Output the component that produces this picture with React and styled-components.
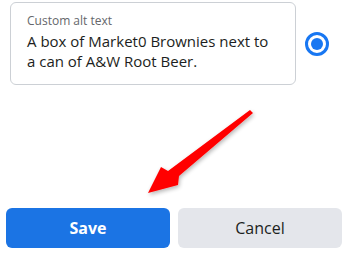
import React from "react";
import styled, { createGlobalStyle } from "styled-components";

const Global = createGlobalStyle`
  html, body { margin: 0; padding: 0; background: #fff; }
  body { font-family: "Open Sans", "Noto Sans", Arial, sans-serif; }
`;

const Page = styled.div`
  position: relative;
  width: 350px;
  height: 258px;
  overflow: hidden;
  display: flex;
  flex-direction: column;
  padding: 2px 8px 10px 6px;
  box-sizing: border-box;
`;

const Row = styled.div`
  display: flex;
  align-items: center;
  gap: 9px;
  padding-left: 4px;
`;

const Field = styled.div`
  width: 286px;
  height: 83px;
  box-sizing: border-box;
  border: 1px solid #ccd0d5;
  border-radius: 6px;
  padding: 10px 16px 0 16px;
`;

const Label = styled.div`
  font-size: 12px;
  line-height: 16px;
  color: #65676b;
`;

const Value = styled.div`
  font-size: 15px;
  line-height: 20px;
  color: #1c1e21;
  margin-top: 2px;
`;

const Radio = styled.div`
  width: 24px;
  height: 24px;
  box-sizing: border-box;
  border-radius: 50%;
  border: 3px solid #1877f2;
  display: flex;
  align-items: center;
  justify-content: center;
  &::after {
    content: "";
    width: 12px;
    height: 12px;
    border-radius: 50%;
    background: #1877f2;
  }
`;

const Spacer = styled.div`
  flex: 1;
`;

const Buttons = styled.div`
  display: flex;
  gap: 8px;
`;

const Button = styled.button`
  flex: 1;
  height: 40px;
  border: none;
  border-radius: 6px;
  font-family: inherit;
  font-size: 16px;
  font-weight: ${(p) => (p.$primary ? 700 : 500)};
  background: ${(p) => (p.$primary ? "#1b74e4" : "#e4e6eb")};
  color: ${(p) => (p.$primary ? "#fff" : "#1c1e21")};
  padding: 0;
`;

const Arrow = styled.svg`
  position: absolute;
  left: 0;
  top: 0;
  pointer-events: none;
`;

export default function App() {
  return (
    <>
      <Global />
      <Page>
        <Row>
          <Field>
            <Label>Custom alt text</Label>
            <Value>
              A box of Market0 Brownies next to
              <br />a can of A&amp;W Root Beer.
            </Value>
          </Field>
          <Radio />
        </Row>
        <Spacer />
        <Buttons>
          <Button $primary>Save</Button>
          <Button>Cancel</Button>
        </Buttons>
        <Arrow width="350" height="258" viewBox="0 0 350 258">
          <defs>
            <filter id="sh" x="-20%" y="-20%" width="140%" height="140%">
              <feGaussianBlur in="SourceAlpha" stdDeviation="2" />
              <feOffset dx="1" dy="2" result="b" />
              <feComponentTransfer>
                <feFuncA type="linear" slope="0.3" />
              </feComponentTransfer>
              <feMerge>
                <feMergeNode />
                <feMergeNode in="SourceGraphic" />
              </feMerge>
            </filter>
          </defs>
          <polygon
            filter="url(#sh)"
            fill="#ff0000"
            points="250,110 253,113 179,176 178,185 148,193 161,167 168,171"
          />
        </Arrow>
      </Page>
    </>
  );
}
